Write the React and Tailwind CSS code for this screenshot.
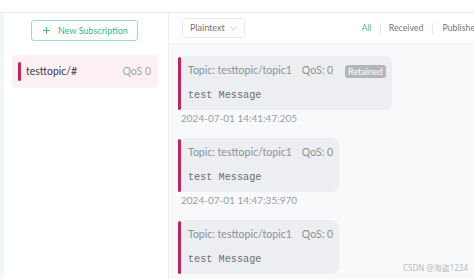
import React from 'react';
import { Plus, ChevronDown } from 'lucide-react';

const messages = [
  { topic: 'testtopic/topic1', qos: 0, payload: 'test Message', time: '2024-07-01 14:41:47:205', retained: true },
  { topic: 'testtopic/topic1', qos: 0, payload: 'test Message', time: '2024-07-01 14:47:35:970', retained: false },
  { topic: 'testtopic/topic1', qos: 0, payload: 'test Message', time: null, retained: false },
];

const MessageBubble = ({ msg }) => (
  <div className="flex flex-col items-start">
    <div className="relative h-[54px] rounded-[8px] bg-[#eceef1] pl-[10px] pr-[6px] pt-[7px]">
      <span className="absolute left-0 top-[1px] bottom-0 w-[3px] rounded-full bg-[#c4245b]" />
      <div className="flex h-[16px] items-center gap-[10px] text-[10.5px] text-[#8e9196]">
        <span>Topic: {msg.topic}</span>
        <span>QoS: {msg.qos}</span>
        {msg.retained && (
          <span className="ml-[2px] rounded-[3px] bg-[#b3b6bb] px-[3px] text-[9px] leading-[13px] text-white">Retained</span>
        )}
      </div>
      <div className="mt-[10px] pr-[4px] font-['Liberation_Mono',monospace] text-[10.2px] leading-[14px] text-[#6d7075]">
        {msg.payload}
      </div>
    </div>
    {msg.time && (
      <div className="mt-[2px] ml-[3px] text-[10px] leading-[13px] text-[#9a9da2]">{msg.time}</div>
    )}
  </div>
);

export default function App() {
  return (
    <div className="flex h-[279px] w-[474px] flex-col overflow-hidden bg-white font-['Lato','Noto_Sans',sans-serif]">
      <div className="h-[13px] shrink-0 border-b border-[#eaedf0] bg-white" />
      <div className="flex flex-1 min-h-0">
        <div className="w-[4px] shrink-0 bg-[#f3f7f8]" />
        <aside className="flex w-[165px] shrink-0 flex-col border-r border-[#eeeff1] bg-white">
          <button className="ml-[27px] mt-[7px] flex h-[21px] w-[107px] items-center justify-center gap-[6px] whitespace-nowrap rounded-[3px] border border-[#9ddcc1] text-[9px] text-[#3fb57f]">
            <Plus size={11} strokeWidth={2} />
            <span>New Subscription</span>
          </button>
          <div className="ml-[8px] mt-[14px] flex h-[33px] w-[146px] items-center rounded-[5px] bg-[#fdf0f3] pl-[6px] pr-[7px]">
            <span className="h-[19px] w-[3px] rounded-full bg-[#c4245b]" />
            <span className="ml-[5px] flex-1 text-[10.5px] text-[#3c3f44]">testtopic/#</span>
            <span className="text-[10.5px] text-[#a3a6ab]">QoS 0</span>
          </div>
        </aside>
        <main className="relative flex flex-1 min-w-0 flex-col overflow-hidden bg-[#f8f9fb]">
          <div className="flex h-[30px] shrink-0 items-center bg-white shadow-[0_1px_3px_rgba(0,0,0,0.05)]">
            <div className="ml-[13px] flex h-[20px] w-[63px] items-center justify-between whitespace-nowrap rounded-[3px] border border-[#e9ebee] pl-[7px] pr-[5px] text-[9px] text-[#6f7378]">
              <span>Plaintext</span>
              <ChevronDown size={11} className="shrink-0 text-[#b7babe]" />
            </div>
            <div className="ml-auto mr-[-6px] flex shrink-0 items-center whitespace-nowrap text-[8.8px] text-[#75797e]">
              <span className="text-[#4dbb8a]">All</span>
              <span className="mx-[8px] h-[11px] w-px bg-[#e5e7ea]" />
              <span>Received</span>
              <span className="mx-[9px] h-[11px] w-px bg-[#e5e7ea]" />
              <span>Published</span>
            </div>
          </div>
          <div className="flex flex-col gap-[13px] pl-[9px] pt-[13px]">
            {messages.map((m, i) => (
              <MessageBubble key={i} msg={m} />
            ))}
          </div>
          <div className="absolute bottom-[5px] right-[6px] font-['Noto_Sans','Noto_Sans_CJK_SC',sans-serif] text-[8px] text-[#b9bcc0]">
            CSDN @海盗1234
          </div>
        </main>
      </div>
    </div>
  );
}
